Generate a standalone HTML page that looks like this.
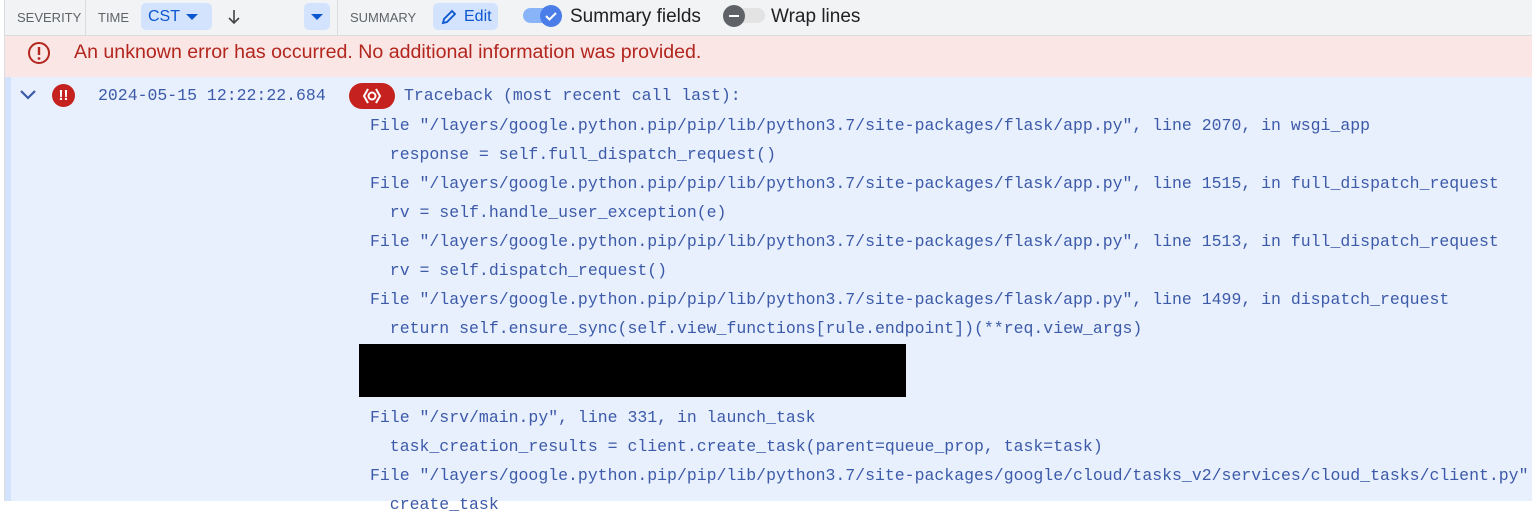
<!DOCTYPE html>
<html><head><style>
body{margin:0;width:1532px;height:501px;overflow:hidden;background:#fff;font-family:"Liberation Sans",sans-serif;position:relative}
.hdr{position:absolute;left:5px;top:0;width:1527px;height:35px;background:#f1f3f4;border-bottom:1px solid #dadce0}
.lb{position:absolute;top:10px;font-size:13px;color:#5f6368}
.sep{position:absolute;top:0;width:1px;height:35px;background:#dadce0}
.chip{position:absolute;top:3px;height:27px;background:#d3e3fd;border-radius:5px;color:#0b57d0;font-size:16px}
.err{position:absolute;left:5px;top:36px;width:1527px;height:41px;background:#fae6e5;color:#b3261e;font-size:19.6px}
.row{position:absolute;left:5px;top:77px;width:1527px;height:424px;background:#e8f0fe}
.bar{position:absolute;left:5px;top:77px;width:6px;height:424px;background:#d3e3fd}
.mono{position:absolute;font-family:"Liberation Mono",monospace;font-size:16.5px;color:#3c5aa8;white-space:pre;line-height:29px}
</style></head><body>
<div style="position:absolute;left:4px;top:0;width:1px;height:501px;background:#dadce0"></div>
<div class="hdr"></div>
<div class="lb" style="left:17px">SEVERITY</div>
<div class="sep" style="left:85px"></div>
<div class="lb" style="left:98px">TIME</div>
<div class="chip" style="left:141px;width:71px"><span style="position:absolute;left:7px;top:5px">CST</span><svg style="position:absolute;left:44px;top:10px" width="14" height="8"><path d="M1 1h12L7 7z" fill="#0b57d0"/></svg></div>
<svg style="position:absolute;left:227px;top:9px" width="14" height="16"><path d="M7 1v13M2 9l5 5 5-5" stroke="#444" stroke-width="1.6" fill="none"/></svg>
<div class="chip" style="left:304px;width:26px"><svg style="position:absolute;left:6px;top:10px" width="14" height="8"><path d="M1 1h12L7 7z" fill="#0b57d0"/></svg></div>
<div class="sep" style="left:337px"></div>
<div class="lb" style="left:350px">SUMMARY</div>
<div class="chip" style="left:433px;width:65px"><svg style="position:absolute;left:8px;top:6px" width="16" height="16"><path d="M2 14l1-4 8-8 3 3-8 8z" stroke="#0b57d0" stroke-width="1.8" fill="none"/></svg><span style="position:absolute;left:31px;top:5px">Edit</span></div>
<div style="position:absolute;left:523px;top:8px;width:36px;height:15px;border-radius:8px;background:#8ab4f8"></div>
<div style="position:absolute;left:540px;top:5px;width:22px;height:22px;border-radius:50%;background:#4a7de8"><svg width="22" height="22"><path d="M6 11l3.5 3.5L16 8" stroke="#fff" stroke-width="2" fill="none"/></svg></div>
<div style="position:absolute;left:570px;top:6px;font-size:19px;color:#202124">Summary fields</div>
<div style="position:absolute;left:727px;top:8px;width:38px;height:15px;border-radius:8px;background:#e3e3e3"></div>
<div style="position:absolute;left:723px;top:5px;width:22px;height:22px;border-radius:50%;background:#5f6368"><div style="position:absolute;left:6px;top:10px;width:10px;height:2px;background:#fff"></div></div>
<div style="position:absolute;left:771px;top:6px;font-size:19px;color:#202124">Wrap lines</div>
<div class="err"><svg style="position:absolute;left:22px;top:5px" width="24" height="24"><circle cx="12" cy="12" r="10" stroke="#b3261e" stroke-width="2" fill="none"/><path d="M12 6v8" stroke="#b3261e" stroke-width="2.4"/><circle cx="12" cy="17.5" r="1.4" fill="#b3261e"/></svg><span style="position:absolute;left:69px;top:5px">An unknown error has occurred. No additional information was provided.</span></div>
<div class="row"></div><div class="bar"></div>
<svg style="position:absolute;left:19px;top:89px" width="18" height="12"><path d="M2 2l7 7 7-7" stroke="#3c5aa8" stroke-width="2.2" fill="none"/></svg>
<div style="position:absolute;left:52px;top:84px;width:23px;height:23px;border-radius:50%;background:#c5221f;color:#fff;font-weight:bold;font-size:15px;text-align:center;line-height:23px">!!</div>
<div class="mono" style="left:98px;top:81px">2024-05-15 12:22:22.684</div>
<div style="position:absolute;left:349px;top:83px;width:46px;height:26px;border-radius:13px;background:#c5221f"><svg width="46" height="26"><path d="M19 6l-4 7 4 7M27 6l4 7-4 7" stroke="#fff" stroke-width="2" fill="none"/><circle cx="23" cy="13" r="3.5" stroke="#fff" stroke-width="2" fill="none"/></svg></div>
<div class="mono" style="left:404px;top:81px">Traceback (most recent call last):</div>
<div class="mono" style="left:370px;top:111px">File "/layers/google.python.pip/pip/lib/python3.7/site-packages/flask/app.py", line 2070, in wsgi_app
  response = self.full_dispatch_request()
File "/layers/google.python.pip/pip/lib/python3.7/site-packages/flask/app.py", line 1515, in full_dispatch_request
  rv = self.handle_user_exception(e)
File "/layers/google.python.pip/pip/lib/python3.7/site-packages/flask/app.py", line 1513, in full_dispatch_request
  rv = self.dispatch_request()
File "/layers/google.python.pip/pip/lib/python3.7/site-packages/flask/app.py", line 1499, in dispatch_request
  return self.ensure_sync(self.view_functions[rule.endpoint])(**req.view_args)</div>
<div style="position:absolute;left:359px;top:344px;width:547px;height:53px;background:#000"></div>
<div class="mono" style="left:370px;top:403px">File "/srv/main.py", line 331, in launch_task
  task_creation_results = client.create_task(parent=queue_prop, task=task)
File "/layers/google.python.pip/pip/lib/python3.7/site-packages/google/cloud/tasks_v2/services/cloud_tasks/client.py"
  create_task</div>
</body></html>
